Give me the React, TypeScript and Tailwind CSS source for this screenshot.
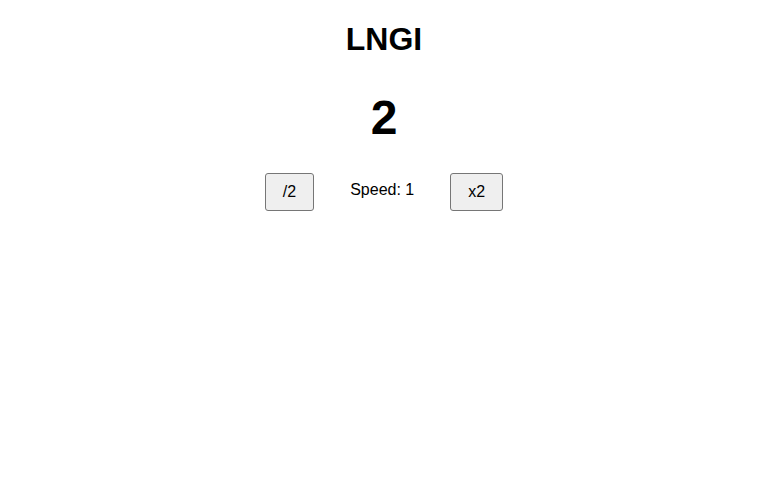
import React, { useState } from "react";

export default function App() {
  const [speed, setSpeed] = useState(1);
  return (
    <div className="flex flex-col items-center bg-white text-black min-h-[480px]" style={{ fontFamily: '"Liberation Sans", Arial, sans-serif' }}>
      <h1 className="mt-[21.44px] text-[32px] font-bold leading-[normal]">LNGI</h1>
      <div className="mt-[32px] text-[48px] font-bold leading-[normal]">2</div>
      <div className="mt-[28px] flex items-start gap-[36px]">
        <button
          className="rounded-[3px] border border-[#767676] bg-[#efefef] px-[17px] py-[9px] text-[16px] leading-[normal] text-black"
          onClick={() => setSpeed(speed / 2)}
        >
          /2
        </button>
        <span className="mt-[8px] text-[16px] leading-[normal]">Speed: {speed}</span>
        <button
          className="rounded-[3px] border border-[#767676] bg-[#efefef] px-[17px] py-[9px] text-[16px] leading-[normal] text-black"
          onClick={() => setSpeed(speed * 2)}
        >
          x2
        </button>
      </div>
    </div>
  );
}
